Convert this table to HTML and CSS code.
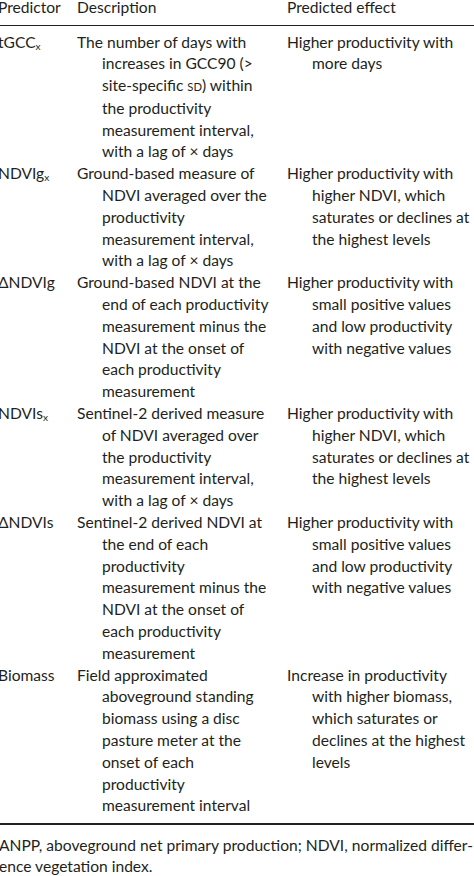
FILE: index.html
```html
<!DOCTYPE html>
<html>
<head>
<meta charset="utf-8">
<link rel="stylesheet" href="styles.css">
</head>
<body>
<table class="tbl">
  <thead>
    <tr>
      <th class="c1">Predictor</th>
      <th class="c2">Description</th>
      <th class="c3">Predicted effect</th>
    </tr>
  </thead>
  <tbody>
    <tr>
      <td class="c1">tGCC<sub>x</sub></td>
      <td class="c2"><span class="ln">The number of days with</span><span class="ln">increases in GCC90 (&gt;</span><span class="ln">site-specific <span class="sc">sd</span>) within</span><span class="ln">the productivity</span><span class="ln">measurement interval,</span><span class="ln">with a lag of × days</span></td>
      <td class="c3"><span class="ln">Higher productivity with</span><span class="ln">more days</span></td>
    </tr>
    <tr>
      <td class="c1">NDVIg<sub>x</sub></td>
      <td class="c2"><span class="ln">Ground-based measure of</span><span class="ln">NDVI averaged over the</span><span class="ln">productivity</span><span class="ln">measurement interval,</span><span class="ln">with a lag of × days</span></td>
      <td class="c3"><span class="ln">Higher productivity with</span><span class="ln">higher NDVI, which</span><span class="ln">saturates or declines at</span><span class="ln">the highest levels</span></td>
    </tr>
    <tr>
      <td class="c1">ΔNDVIg</td>
      <td class="c2"><span class="ln">Ground-based NDVI at the</span><span class="ln">end of each productivity</span><span class="ln">measurement minus the</span><span class="ln">NDVI at the onset of</span><span class="ln">each productivity</span><span class="ln">measurement</span></td>
      <td class="c3"><span class="ln">Higher productivity with</span><span class="ln">small positive values</span><span class="ln">and low productivity</span><span class="ln">with negative values</span></td>
    </tr>
    <tr>
      <td class="c1">NDVIs<sub>x</sub></td>
      <td class="c2"><span class="ln">Sentinel-2 derived measure</span><span class="ln">of NDVI averaged over</span><span class="ln">the productivity</span><span class="ln">measurement interval,</span><span class="ln">with a lag of × days</span></td>
      <td class="c3"><span class="ln">Higher productivity with</span><span class="ln">higher NDVI, which</span><span class="ln">saturates or declines at</span><span class="ln">the highest levels</span></td>
    </tr>
    <tr>
      <td class="c1">ΔNDVIs</td>
      <td class="c2"><span class="ln">Sentinel-2 derived NDVI at</span><span class="ln">the end of each</span><span class="ln">productivity</span><span class="ln">measurement minus the</span><span class="ln">NDVI at the onset of</span><span class="ln">each productivity</span><span class="ln">measurement</span></td>
      <td class="c3"><span class="ln">Higher productivity with</span><span class="ln">small positive values</span><span class="ln">and low productivity</span><span class="ln">with negative values</span></td>
    </tr>
    <tr>
      <td class="c1">Biomass</td>
      <td class="c2"><span class="ln">Field approximated</span><span class="ln">aboveground standing</span><span class="ln">biomass using a disc</span><span class="ln">pasture meter at the</span><span class="ln">onset of each</span><span class="ln">productivity</span><span class="ln">measurement interval</span></td>
      <td class="c3"><span class="ln">Increase in productivity</span><span class="ln">with higher biomass,</span><span class="ln">which saturates or</span><span class="ln">declines at the highest</span><span class="ln">levels</span></td>
    </tr>
  </tbody>
</table>
<div class="note">
  <span class="note-line justified">ANPP, aboveground net primary production; NDVI, normalized differ-</span>
  <span class="note-line">ence vegetation index.</span>
</div>
</body>
</html>
```
FILE: styles.css
```css
html, body {
  margin: 0;
  padding: 0;
  background: #ffffff;
}
body {
  width: 474px;
  overflow: hidden;
  font-family: Lato, "Open Sans", sans-serif;
  font-size: 15.6px;
  color: #231f20;
}
.tbl {
  width: 476px;
  margin-left: -2px;
  border-collapse: collapse;
  table-layout: fixed;
}
.tbl th, .tbl td {
  padding: 0;
  text-align: left;
  vertical-align: top;
  font-weight: normal;
  white-space: nowrap;
}
.tbl th {
  line-height: 15px;
  padding-bottom: 9.5px;
  border-bottom: 1.5px solid #231f20;
}
.tbl th.c1 { width: 79px; }
.tbl th.c2 { width: 210px; }
.tbl td {
  line-height: 21.8px;
}
.tbl tbody tr:first-child td { padding-top: 6px; }
.tbl tbody tr:last-child td {
  padding-bottom: 6px;
  border-bottom: 2px solid #231f20;
}
.ln {
  display: block;
  padding-left: 25px;
}
.ln:first-child { padding-left: 0; }
.sc {
  font-size: 0.72em;
  text-transform: uppercase;
}
sub {
  font-size: 0.65em;
  vertical-align: -0.15em;
  line-height: 0;
}
.note {
  margin: 10px 0 0 -1px;
  width: 474px;
  line-height: 21px;
}
.note-line {
  display: block;
  white-space: nowrap;
}
.note-line.justified {
  white-space: normal;
  text-align: justify;
  text-align-last: justify;
}
```
